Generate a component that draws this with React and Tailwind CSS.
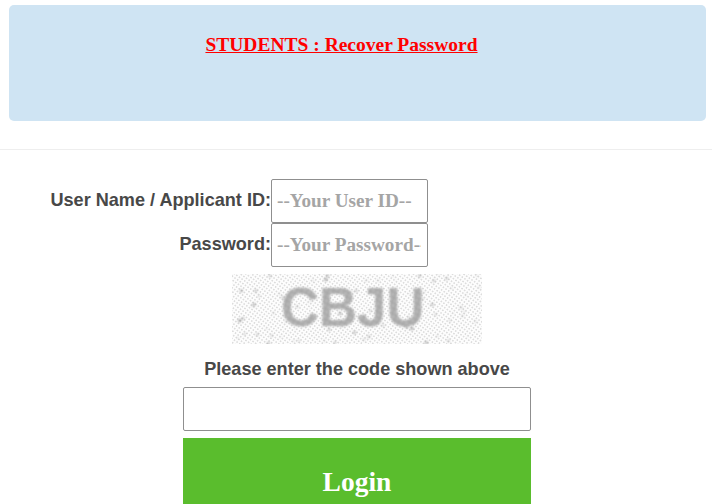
const sans = '"Liberation Sans", Arial, sans-serif';
const serif = '"Liberation Serif", "Times New Roman", serif';

const specks = Array.from({ length: 90 }, (_, i) => {
  const a = (i * 97.13) % 250;
  const b = (i * i * 13.7 + i * 41.9) % 70;
  return { x: a, y: b, r: 0.7 + ((i * 7) % 5) * 0.28, o: 0.15 + ((i * 11) % 6) * 0.08 };
});

function Captcha() {
  return (
    <svg width="250" height="70" viewBox="0 0 250 70" className="block" role="img" aria-label="CBJU">
      <defs>
        <pattern id="bg" width="3.2" height="3.2" patternUnits="userSpaceOnUse" patternTransform="rotate(35)">
          <rect width="3.2" height="3.2" fill="#fdfdfd" />
          <circle cx="1.6" cy="1.6" r="0.75" fill="#cfcfcf" />
        </pattern>
        <pattern id="fg" width="5" height="5" patternUnits="userSpaceOnUse" patternTransform="rotate(25)">
          <rect width="5" height="5" fill="#a8a8a8" />
          <circle cx="2.5" cy="2.5" r="1.2" fill="#cacaca" />
        </pattern>
        <filter id="soft" x="-5%" y="-5%" width="110%" height="110%">
          <feGaussianBlur stdDeviation="0.8" />
        </filter>
        <filter id="soft2" x="-5%" y="-5%" width="110%" height="110%">
          <feGaussianBlur stdDeviation="0.35" />
        </filter>
      </defs>
      <rect width="250" height="70" fill="url(#bg)" filter="url(#soft2)" />
      <g filter="url(#soft)">
        {specks.map((s, i) => (
          <circle key={i} cx={s.x} cy={s.y} r={s.r} fill="#777" opacity={s.o} />
        ))}
        <text
          transform="translate(49 51.5) scale(0.958 1)"
          fontFamily={sans}
          fontWeight="700"
          fontSize="55"
          fill="url(#fg)"
        >
          CBJU
        </text>
      </g>
    </svg>
  );
}

export default function App() {
  return (
    <div className="h-[504px] w-[712px] overflow-hidden bg-white text-[#484848]" style={{ fontFamily: sans }}>
      <div className="px-[9px] pt-[5px]">
        <div className="h-[116px] w-[697px] rounded-[5px] bg-[#cfe4f3] pt-[29px] pr-[32px] text-center">
          <a
            href="#"
            className="text-[19.5px] leading-[22px] font-bold text-[#ff0000] underline"
            style={{ fontFamily: serif }}
          >
            STUDENTS : Recover Password
          </a>
        </div>
      </div>
      <hr className="mt-[28px] border-0 border-t border-[#eeeeee]" />
      <div className="grid grid-cols-[271px_157px] pt-[29px]">
        <label className="flex h-[44px] items-center justify-end text-[18.1px] font-bold">User Name / Applicant ID:</label>
        <input
          placeholder="--Your User ID--"
          className="h-[44px] w-[157px] rounded-[2px] border border-[#8f8f8f] pr-[6px] pl-[5px] text-[19.2px] font-bold placeholder:text-[#a5a5a5]"
          style={{ fontFamily: serif }}
        />
        <label className="flex h-[44px] items-center justify-end text-[18.1px] font-bold">Password:</label>
        <input
          placeholder="--Your Password--"
          className="h-[44px] w-[157px] rounded-[2px] border border-[#8f8f8f] pr-[6px] pl-[5px] text-[19.2px] font-bold placeholder:text-[#a5a5a5]"
          style={{ fontFamily: serif }}
        />
      </div>
      <div className="ml-[183px] flex w-[348px] flex-col items-center">
        <div className="mt-[7px]">
          <Captcha />
        </div>
        <p className="mt-[15px] text-[18.1px] leading-[20px] font-bold">Please enter the code shown above</p>
        <input className="mt-[8px] h-[44px] w-[348px] rounded-[2px] border border-[#8f8f8f]" />
        <button
          className="mt-[7px] h-[90px] w-[348px] bg-[#5abd2d] pb-[2px] text-[27.5px] leading-[88px] font-bold text-white"
          style={{ fontFamily: serif }}
        >
          Login
        </button>
      </div>
    </div>
  );
}
